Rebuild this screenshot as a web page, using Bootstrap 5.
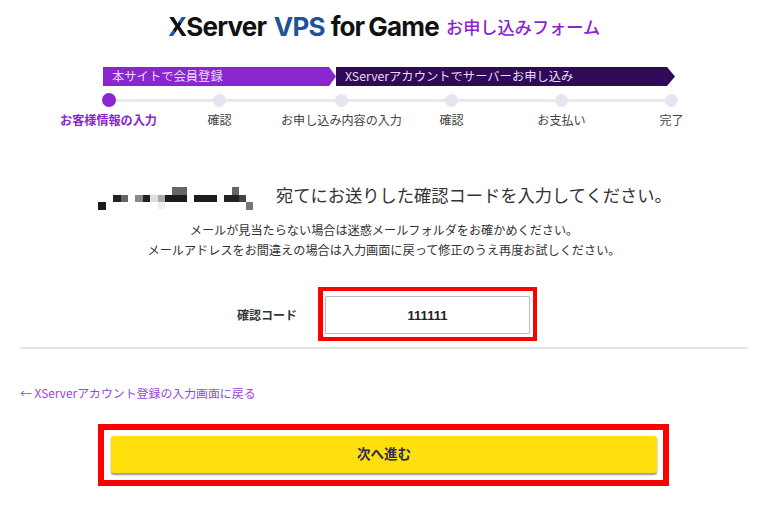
<!DOCTYPE html>
<html lang="ja">
<head>
<meta charset="utf-8">
<title>XServer VPS for Game</title>
<link rel="stylesheet" href="https://cdn.jsdelivr.net/npm/bootstrap@5.3.0/dist/css/bootstrap.min.css">
<style>
html,body{height:512px;overflow:hidden}
body{font-family:"Noto Sans CJK JP","Liberation Sans",sans-serif;color:#333;background:#fff;font-size:12px}
.top-head{height:67px;padding:0 0 14px 168px;gap:7px}
.brand-name{font-family:"Inter","Liberation Sans",sans-serif;font-weight:700;font-size:26px;letter-spacing:-.75px;color:#111;line-height:1;white-space:nowrap}
.brand-x{background:linear-gradient(45deg,#1c5aa8 0 36%,#111 36% 64%,#1c5aa8 64%);-webkit-background-clip:text;background-clip:text;color:transparent}
.brand-vps{color:#1f5299;margin:0 6px 0 2px}
.brand-for{margin-right:4px;letter-spacing:-1px}
.brand-form{color:#8a25cf;font-size:17.2px;line-height:1;font-weight:500;margin-top:1px;white-space:nowrap}
.phase-row{margin-left:103px;width:572px;height:19px}
.phase-one,.phase-two{color:#e9dcf5;font-size:12.3px;line-height:19px;padding-left:9px;white-space:nowrap}
.phase-one{width:233px;background:#8a25cf;clip-path:polygon(0 0,calc(100% - 7px) 0,100% 50%,calc(100% - 7px) 100%,0 100%)}
.phase-two{width:339px;background:#2f0a57;clip-path:polygon(0 0,calc(100% - 8px) 0,100% 50%,calc(100% - 8px) 100%,0 100%)}
.step-grid{display:grid;grid-template-columns:121px 101px 143px 77px 143px 77px;margin-left:48px;width:662px;position:relative;margin-top:7px}
.step-grid::before{content:"";position:absolute;left:61px;right:39px;top:6px;height:3px;background:#e9e7f0}
.step-cell{position:relative;text-align:center;white-space:nowrap;font-size:12.1px;color:#444}
.step-dot{width:13px;height:13px;border-radius:50%;background:#e6e4ee;margin:1px auto 4px}
.step-now{color:#8a25cf;font-weight:700}
.step-now .step-dot{background:#8a25cf;width:14px;height:14px;margin-top:0}
.sent-row{margin-top:55px;height:24px;padding-left:98px;gap:23px}
.mosaic-art{margin-top:4px}
.sent-text{font-size:17.25px;color:#333;white-space:nowrap;line-height:24px;margin-bottom:2px}
.note-text{margin-top:12px;font-size:12.15px;line-height:20px;color:#333}
.code-row{margin-top:27px;padding-left:237px;height:54px;gap:21px}
.code-label{font-weight:700;font-size:12px;color:#333;width:60px;white-space:nowrap;margin-top:2px}
.red-frame{border:solid #f00;border-width:4px 4px 4px 5px;padding:5px 3px 3px 2px}
.code-input.form-control{width:205px;height:38px;border:1.5px solid #bbb;border-radius:1px;text-align:center;font-weight:700;font-size:13px;color:#222;font-family:"Liberation Sans",sans-serif;padding:0}
.rule-line{margin:6px 20px 0;width:728px;height:2px;background:#e5e5e5}
.back-link{display:block;margin:35px 0 0 20px;color:#9a45dc;font-size:11.9px;line-height:18px;text-decoration:none}
.next-wrap{margin-top:22px;margin-left:98px;width:571px;height:62px;border:6px solid #f00;padding:6px 6px 7px 7px}
.next-btn.btn{display:block;width:100%;height:37px;background:#ffe00c;border:0;border-radius:3px;box-shadow:0 1.5px 2px rgba(60,60,90,.55);font-weight:700;font-size:13.5px;color:#2d2a55;padding:0 0 3px}
</style>
</head>
<body>
<header class="d-flex top-head align-items-center">
  <div class="brand-name"><span class="brand-x">X</span>Server <span class="brand-vps">VPS</span><span class="brand-for">for</span>Game</div>
  <div class="brand-form">お申し込みフォーム</div>
</header>
<nav aria-label="進行状況">
  <div class="d-flex phase-row">
    <div class="phase-one">本サイトで会員登録</div>
    <div class="phase-two">XServerアカウントでサーバーお申し込み</div>
  </div>
  <div class="step-grid">
    <div class="step-cell step-now"><div class="step-dot"></div>お客様情報の入力</div>
    <div class="step-cell"><div class="step-dot"></div>確認</div>
    <div class="step-cell"><div class="step-dot"></div>お申し込み内容の入力</div>
    <div class="step-cell"><div class="step-dot"></div>確認</div>
    <div class="step-cell"><div class="step-dot"></div>お支払い</div>
    <div class="step-cell"><div class="step-dot"></div>完了</div>
  </div>
</nav>
<main>
  <div class="d-flex align-items-center sent-row">
    <svg class="mosaic-art" width="155" height="23" viewBox="0 0 155 23" aria-hidden="true">
      <rect x="0" y="15" width="8" height="8" fill="#1c1c1c"/>
      <rect x="15" y="8" width="8" height="7" fill="#222"/>
      <rect x="23" y="8" width="7" height="7" fill="#666"/>
      <rect x="37" y="8" width="8" height="7" fill="#888"/>
      <rect x="45" y="8" width="7" height="7" fill="#222"/>
      <rect x="52" y="8" width="8" height="7" fill="#ddd"/>
      <rect x="60" y="8" width="7" height="7" fill="#aaa"/>
      <rect x="60" y="15" width="7" height="7" fill="#eee"/>
      <rect x="67" y="8" width="22" height="7" fill="#1c1c1c"/>
      <rect x="74" y="0" width="15" height="8" fill="#666"/>
      <rect x="96" y="8" width="23" height="7" fill="#1c1c1c"/>
      <rect x="126" y="8" width="15" height="7" fill="#222"/>
      <rect x="134" y="0" width="7" height="8" fill="#666"/>
      <rect x="141" y="8" width="7" height="7" fill="#444"/>
      <rect x="148" y="15" width="7" height="8" fill="#777"/>
    </svg>
    <div class="sent-text">宛てにお送りした確認コードを入力してください。</div>
  </div>
  <div class="text-center note-text">
    メールが見当たらない場合は迷惑メールフォルダをお確かめください。<br>
    メールアドレスをお間違えの場合は入力画面に戻って修正のうえ再度お試しください。
  </div>
  <div class="d-flex align-items-center code-row">
    <label class="code-label" for="code">確認コード</label>
    <div class="red-frame"><input id="code" class="form-control code-input" value="111111"></div>
  </div>
  <div class="rule-line"></div>
  <a class="back-link" href="#">← XServerアカウント登録の入力画面に戻る</a>
  <div class="next-wrap"><button class="btn next-btn" type="button">次へ進む</button></div>
</main>
<script src="https://cdn.jsdelivr.net/npm/bootstrap@5.3.0/dist/js/bootstrap.bundle.min.js"></script>
</body>
</html>
